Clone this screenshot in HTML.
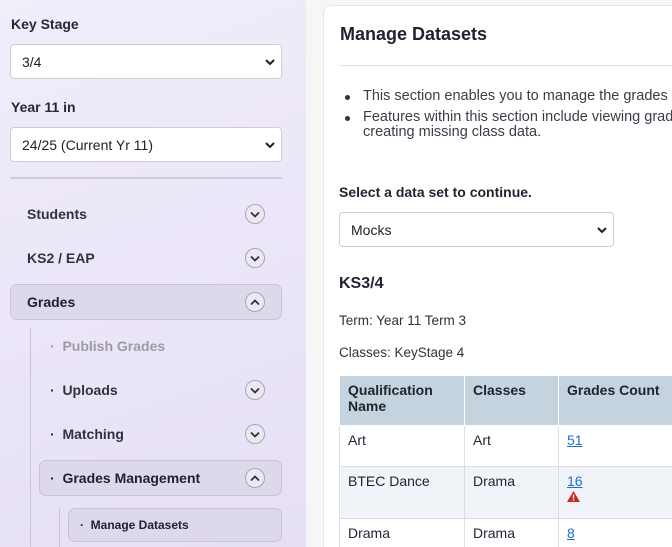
<!DOCTYPE html>
<html><head><style>
*{box-sizing:border-box;margin:0;padding:0}
html,body{width:672px;height:547px;overflow:hidden}
body{font-family:"Liberation Sans",sans-serif;background:#f6f6f7;position:relative;color:#1f2330}
.side{position:absolute;left:0;top:0;width:306px;height:547px;background:linear-gradient(160deg,#f1edf9,#e6dff6);}
.abs{position:absolute}
.lbl{font-size:14px;font-weight:bold;color:#262833}
.sel{position:absolute;background:#fff;border:1px solid #cfccd8;border-radius:4px;font-size:14px;padding-left:11px;display:flex;align-items:center;color:#222}
.sel svg{position:absolute;right:6px;top:50%;margin-top:-4px}
.nav{position:absolute;font-size:14px;font-weight:bold;color:#30323f}
.chev{position:absolute;width:20px;height:20px;border:1px solid #a8a6b8;border-radius:50%;background:#ebe7f3}
.chev svg{position:absolute;left:4px;top:6px}
.box{position:absolute;background:#ddd8ea;border:1px solid #c9c4d8;border-radius:7px}
.card{position:absolute;left:323px;top:5px;width:360px;height:560px;background:#fff;border:1px solid #e6e6ea;border-radius:8px}
td,th{border:1px solid #dcdde2;font-size:14px;text-align:left;vertical-align:top;padding:6px 8px}
th{background:#c5d3df;font-weight:bold;color:#1f2330;border-color:#fff;}
a{color:#1a6fd0;text-decoration:underline}
ul{position:absolute;left:363px;top:89px;font-size:14.5px;color:#3a3d48;line-height:15px;white-space:nowrap;list-style:none}
ul li{position:relative}
ul li:before{content:"";position:absolute;left:-18px;top:6px;width:5px;height:5px;border-radius:50%;background:#333}
</style></head><body>
<div class="side">
<div class="abs lbl" style="left:11px;top:16px">Key Stage</div>
<div class="sel" style="left:10px;top:44px;width:272px;height:35px">3/4<svg width="10" height="8" viewBox="0 0 10 8"><path d="M1 2l4 4 4-4" stroke="#222" stroke-width="2" fill="none"/></svg></div>
<div class="abs lbl" style="left:11px;top:99px">Year 11 in</div>
<div class="sel" style="left:10px;top:127px;width:272px;height:35px">24/25 (Current Yr 11)<svg width="10" height="8" viewBox="0 0 10 8"><path d="M1 2l4 4 4-4" stroke="#222" stroke-width="2" fill="none"/></svg></div>
<div class="abs" style="left:10px;top:177px;width:272px;height:2px;background:#cfcadd"></div>

<div class="nav" style="left:27px;top:206px">Students</div>
<div class="chev" style="left:245px;top:204px"><svg width="10" height="7" viewBox="0 0 10 7"><path d="M1 1.5l4 4 4-4" stroke="#333" stroke-width="1.8" fill="none"/></svg></div>
<div class="nav" style="left:27px;top:250px">KS2 / EAP</div>
<div class="chev" style="left:245px;top:248px"><svg width="10" height="7" viewBox="0 0 10 7"><path d="M1 1.5l4 4 4-4" stroke="#333" stroke-width="1.8" fill="none"/></svg></div>

<div class="box" style="left:10px;top:284px;width:272px;height:36px"></div>
<div class="nav" style="left:27px;top:294px;color:#1f2130">Grades</div>
<div class="chev" style="left:245px;top:292px"><svg width="10" height="7" viewBox="0 0 10 7"><path d="M1 5.5l4-4 4 4" stroke="#333" stroke-width="1.8" fill="none"/></svg></div>

<div class="abs" style="left:30px;top:328px;width:1px;height:220px;background:#c9c5d6"></div>
<div class="nav" style="left:50px;top:338px;color:#9c9aa8">·&nbsp; Publish Grades</div>
<div class="nav" style="left:50px;top:382px">·&nbsp; Uploads</div>
<div class="chev" style="left:245px;top:380px"><svg width="10" height="7" viewBox="0 0 10 7"><path d="M1 1.5l4 4 4-4" stroke="#333" stroke-width="1.8" fill="none"/></svg></div>
<div class="nav" style="left:50px;top:426px">·&nbsp; Matching</div>
<div class="chev" style="left:245px;top:424px"><svg width="10" height="7" viewBox="0 0 10 7"><path d="M1 1.5l4 4 4-4" stroke="#333" stroke-width="1.8" fill="none"/></svg></div>

<div class="box" style="left:39px;top:460px;width:243px;height:36px"></div>
<div class="nav" style="left:50px;top:470px;color:#1f2130">·&nbsp; Grades Management</div>
<div class="chev" style="left:245px;top:468px"><svg width="10" height="7" viewBox="0 0 10 7"><path d="M1 5.5l4-4 4 4" stroke="#333" stroke-width="1.8" fill="none"/></svg></div>

<div class="abs" style="left:59px;top:508px;width:1px;height:40px;background:#c9c5d6"></div>
<div class="box" style="left:68px;top:508px;width:214px;height:34px"></div>
<div class="nav" style="left:80px;top:518px;font-size:12px;color:#1f2130">·&nbsp; Manage Datasets</div>
</div>

<div class="card"></div>
<div class="abs" style="left:340px;top:24px;font-size:18px;font-weight:bold;color:#1f2330">Manage Datasets</div>
<div class="abs" style="left:339px;top:65px;width:340px;height:1px;background:#e2e2e6"></div>
<ul>
<li>This section enables you to manage the grades</li>
<li style="margin-top:6px">Features within this section include viewing grades<br>creating missing class data.</li>
</ul>
<div class="abs lbl" style="left:339px;top:184px;color:#1f2330">Select a data set to continue.</div>
<div class="sel" style="left:339px;top:212px;width:275px;height:35px">Mocks<svg width="10" height="8" viewBox="0 0 10 8"><path d="M1 2l4 4 4-4" stroke="#222" stroke-width="2" fill="none"/></svg></div>
<div class="abs" style="left:339px;top:275px;font-size:16px;font-weight:bold">KS3/4</div>
<div class="abs" style="left:339px;top:313px;font-size:13.5px;color:#333">Term: Year 11 Term 3</div>
<div class="abs" style="left:339px;top:345px;font-size:13.5px;color:#333">Classes: KeyStage 4</div>
<table class="abs" style="left:339px;top:375px;border-collapse:collapse;width:345px">
<tr style="height:50px"><th style="width:125px">Qualification<br>Name</th><th style="width:94px">Classes</th><th>Grades Count</th></tr>
<tr style="height:41px"><td>Art</td><td>Art</td><td><a>51</a></td></tr>
<tr style="height:52px;background:#f0f3f7"><td>BTEC Dance</td><td>Drama</td><td><a>16</a><br><svg width="13" height="11" viewBox="0 0 13 11"><path d="M6.5 0L13 11H0z" fill="#c8282b"/><rect x="5.8" y="3.5" width="1.4" height="4" fill="#fff"/><rect x="5.8" y="8.3" width="1.4" height="1.4" fill="#fff"/></svg></td></tr>
<tr style="height:40px"><td>Drama</td><td>Drama</td><td><a>8</a></td></tr>
</table>
</body></html>
